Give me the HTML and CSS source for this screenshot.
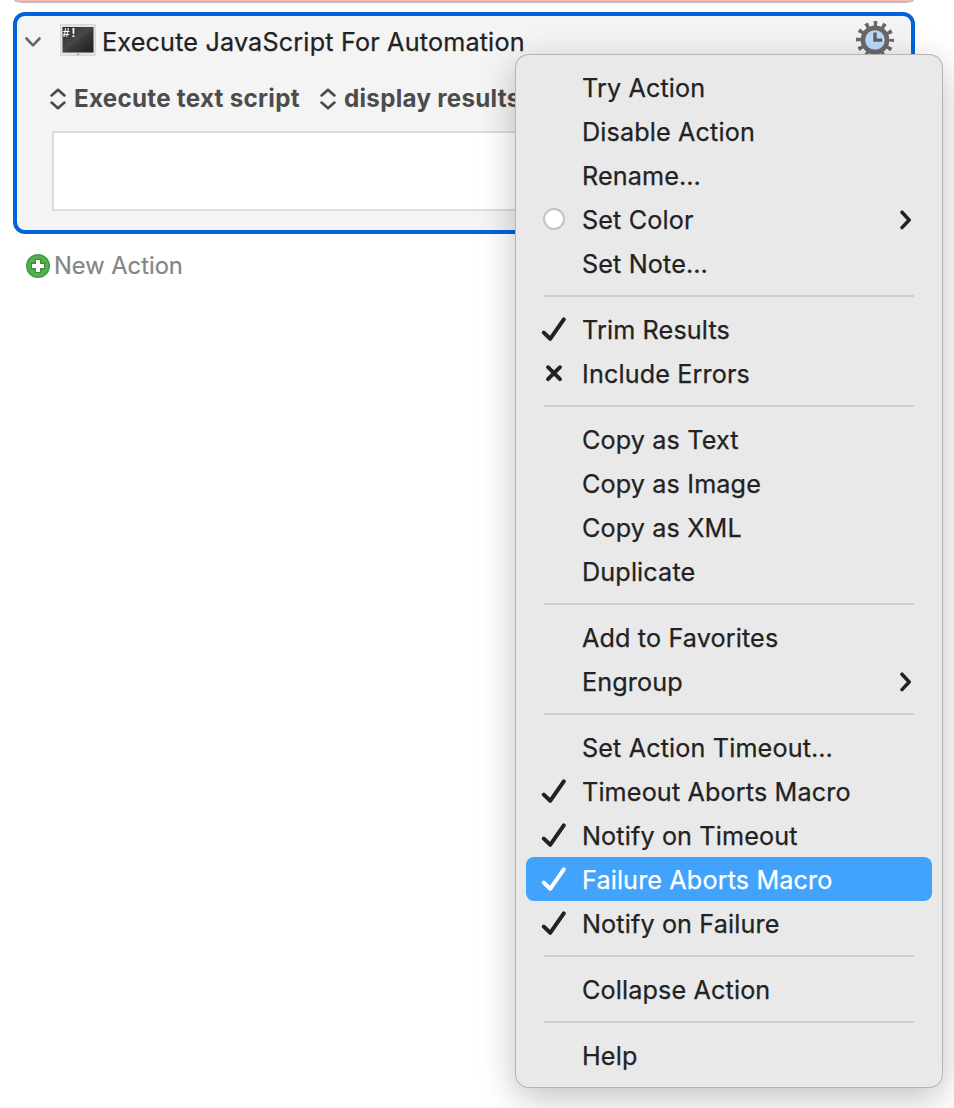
FILE: index.html
```html
<!DOCTYPE html>
<html lang="en">
<head>
<meta charset="utf-8">
<title>Macro editor</title>
<link rel="stylesheet" href="styles.css">
</head>
<body>
<svg class="defs" width="0" height="0">
  <symbol id="check" viewBox="0 0 26 26"><path d="M2.800 15.600 9.200 21.800 22.800 2.300" fill="none" stroke="currentColor" stroke-width="4" stroke-linecap="round" stroke-linejoin="round"/></symbol>
  <symbol id="cross" viewBox="0 0 26 26"><path d="M7 6.200 19 18.200M19 6.200 7 18.200" fill="none" stroke="currentColor" stroke-width="3.900" stroke-linecap="round"/></symbol>
  <symbol id="chev" viewBox="0 0 12 20"><path d="M2 2.200 9.200 10 2 17.600" fill="none" stroke="currentColor" stroke-width="3.500" stroke-linecap="round" stroke-linejoin="round"/></symbol>
  <symbol id="updown" viewBox="0 0 16 22"><path d="M1.600 7.400 8 1.800l6.400 5.600M1.600 14.600 8 20.200l6.400-5.600" fill="none" stroke="currentColor" stroke-width="2.7" stroke-linecap="round" stroke-linejoin="round"/></symbol>
</svg>
<main class="editor">
  <div class="previous"></div>
  <section class="action">
    <header class="action-head">
      <svg class="disclosure" viewBox="0 0 16 10"><path d="M1.500 1.500 8 8.300l6.500-6.800" fill="none" stroke="#666" stroke-width="2.600" stroke-linecap="round" stroke-linejoin="round"/></svg>
      <svg class="terminal" viewBox="0 0 36 32">
        <defs>
          <linearGradient id="screen" x1="0" y1="0" x2="1" y2="1"><stop offset="0" stop-color="#2c2c2c"/><stop offset=".46" stop-color="#484848"/><stop offset=".56" stop-color="#3a3a3a"/><stop offset="1" stop-color="#1d1d1d"/></linearGradient>
        </defs>
        <rect width="36" height="32" rx="1" fill="#e2e2e8"/>
        <rect x=".5" y=".5" width="35" height="31" fill="none" stroke="#cacace" stroke-dasharray="1 1"/>
        <rect x="2.500" y="3" width="31" height="25.500" fill="url(#screen)"/>
        <rect x="17" y="29.500" width="2" height="1.500" fill="#999"/>
        <text x="2.600" y="13.200" class="prompt">#!</text>
      </svg>
      <h1 class="title">Execute JavaScript For Automation</h1>
      <svg class="gear" viewBox="-20 -20 40 40">
        <circle r="16" fill="none" stroke="#686868" stroke-width="6" stroke-dasharray="3.500 4.878" stroke-dashoffset="1.750"/>
        <circle r="12.100" fill="#bcd8fb" stroke="#686868" stroke-width="4.600"/>
        <path d="M0-7.500V.1H7.200" fill="none" stroke="#606060" stroke-width="3.400"/>
      </svg>
    </header>
    <div class="options">
      <svg class="updown"><use href="#updown"/></svg><span class="opt-run">Execute text script</span>
      <svg class="updown"><use href="#updown"/></svg><span class="opt-show">display results</span>
    </div>
    <div class="script-box"></div>
  </section>
  <div class="new-action">
    <svg class="plus" viewBox="0 0 24 24"><circle cx="12" cy="12" r="11.200" fill="#5fac4c" stroke="#35a047" stroke-width="1.600"/><path d="M12 4.700v14.600M4.700 12h14.600" stroke="#35953e" stroke-width="6.800"/><path d="M12 6v12M6 12h12" stroke="#fff" stroke-width="4"/></svg>
    <span class="new-label">New Action</span>
  </div>
</main>
<nav class="menu">
  <div class="item"><span class="mark"></span><span class="label">Try Action</span></div>
  <div class="item"><span class="mark"></span><span class="label">Disable Action</span></div>
  <div class="item"><span class="mark"></span><span class="label">Rename…</span></div>
  <div class="item"><span class="mark"><i class="swatch"></i></span><span class="label">Set Color</span><svg class="chev"><use href="#chev"/></svg></div>
  <div class="item"><span class="mark"></span><span class="label">Set Note…</span></div>
  <div class="separator"></div>
  <div class="item"><span class="mark"><svg class="icon"><use href="#check"/></svg></span><span class="label">Trim Results</span></div>
  <div class="item"><span class="mark"><svg class="icon"><use href="#cross"/></svg></span><span class="label">Include Errors</span></div>
  <div class="separator"></div>
  <div class="item"><span class="mark"></span><span class="label">Copy as Text</span></div>
  <div class="item"><span class="mark"></span><span class="label">Copy as Image</span></div>
  <div class="item"><span class="mark"></span><span class="label">Copy as XML</span></div>
  <div class="item"><span class="mark"></span><span class="label">Duplicate</span></div>
  <div class="separator"></div>
  <div class="item"><span class="mark"></span><span class="label">Add to Favorites</span></div>
  <div class="item"><span class="mark"></span><span class="label">Engroup</span><svg class="chev"><use href="#chev"/></svg></div>
  <div class="separator"></div>
  <div class="item"><span class="mark"></span><span class="label">Set Action Timeout…</span></div>
  <div class="item"><span class="mark"><svg class="icon"><use href="#check"/></svg></span><span class="label">Timeout Aborts Macro</span></div>
  <div class="item"><span class="mark"><svg class="icon"><use href="#check"/></svg></span><span class="label">Notify on Timeout</span></div>
  <div class="item selected"><span class="mark"><svg class="icon"><use href="#check"/></svg></span><span class="label">Failure Aborts Macro</span></div>
  <div class="item"><span class="mark"><svg class="icon"><use href="#check"/></svg></span><span class="label">Notify on Failure</span></div>
  <div class="separator"></div>
  <div class="item"><span class="mark"></span><span class="label">Collapse Action</span></div>
  <div class="separator"></div>
  <div class="item"><span class="mark"></span><span class="label">Help</span></div>
</nav>
</body>
</html>
```
FILE: styles.css
```css
* { box-sizing: border-box; }
body {
  margin: 0;
  height: 1108px;
  position: relative;
  overflow: hidden;
  background: #fff;
  color: #222;
  font-family: Inter, "Liberation Sans", sans-serif;
  font-size: 25.2px;
}
svg { display: block; flex: none; }
.defs { position: absolute; }
.editor { width: 915px; padding-left: 13px; }
.previous {
  height: 3px;
  margin: 0 1px 9px;
  background: #ffb9b9;
  border: 2px solid #bdbdbd;
  border-top: 0;
  border-radius: 0 0 10px 10px / 0 0 3px 3px;
}
.action {
  height: 222px;
  border: 4px solid #0064dc;
  border-radius: 12px;
  background: #f4f4f4;
}
.action-head { display: flex; align-items: center; height: 50px; padding: 0 16px 0 8px; }
.disclosure { width: 16px; height: 10px; margin-top: 2px; }
.terminal { width: 36px; height: 32px; margin: -2px 6px 0 19px; }
.prompt { font: bold 12px "Liberation Mono", monospace; fill: #fff; }
.title {
  margin: 1px 0 0;
  font-size: 25.2px;
  font-weight: 400;
  letter-spacing: .17px;
  -webkit-text-stroke: .25px;
  white-space: nowrap;
}
.gear { width: 40px; height: 40px; margin: -2px 0 0 auto; }
.options {
  display: flex;
  align-items: center;
  height: 65px;
  padding-left: 33px;
  color: #4c4c4c;
  font-size: 24.2px;
  font-weight: 700;
  letter-spacing: .27px;
  white-space: nowrap;
}
.options span { margin-top: -1px; }
.updown { width: 16px; height: 22px; margin-right: 8px; }
.opt-run { width: 246px; }
.script-box { width: 826px; height: 80px; margin-left: 35px; background: #fff; border: 2px solid #dcdcdc; }
.new-action { display: flex; align-items: center; height: 64px; padding-left: 13px; color: #858585; }
.plus { width: 24px; height: 24px; margin-right: 4px; }
.new-label { margin-top: -1px; font-size: 23.7px; -webkit-text-stroke: .2px; }
.menu {
  position: absolute;
  left: 516px;
  top: 55px;
  width: 426px;
  height: 1032px;
  padding: 10px;
  border-radius: 13px;
  background: #e9e9e9;
  box-shadow: 0 0 0 1px #b5b5b5, 0 10px 36px rgba(0, 0, 0, .26);
}
.item { display: flex; align-items: center; height: 44px; padding: 2px 20px 0 15px; border-radius: 8px; }
.selected { background: #41a3fc; color: #fff; }
.mark { display: flex; width: 41px; }
.icon { width: 26px; height: 26px; }
.swatch { width: 22px; height: 22px; margin: -2px 0 0 2px; border: 2px solid #c3c3c3; border-radius: 50%; background: #fff; }
.label { letter-spacing: .13px; -webkit-text-stroke: .25px; white-space: nowrap; }
.chev { width: 12px; height: 20px; margin-left: auto; }
.separator { height: 2px; margin: 10px 18px; background: #cfcfcf; }
```
